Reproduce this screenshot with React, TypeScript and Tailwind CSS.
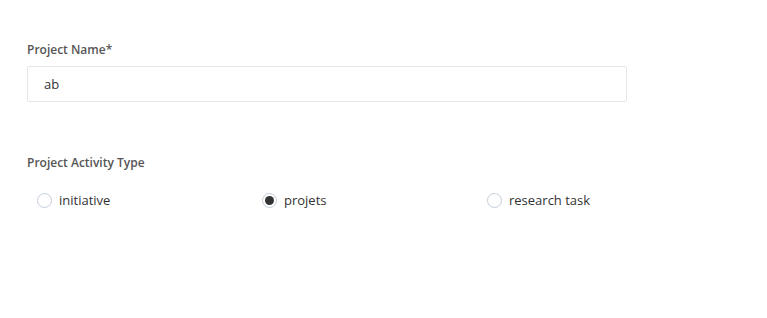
import React from "react";

const options = ["initiative", "projets", "research task"];

const App = () => {
  const selected = "projets";
  return (
    <div className="w-[767px] h-[318px] bg-white text-[#333] font-['Open_Sans',sans-serif]">
      <div className="pt-[42px] pl-[27px]">
        <label className="block text-[12px] font-semibold leading-[16px] text-[#555]">Project Name*</label>
        <div className="mt-[8px] w-[600px] h-[36px] border border-[#e6e6e6] rounded-[2px] flex items-center pl-[16px] pt-[2px] text-[13px] text-[#333]">
          ab
        </div>
        <label className="block mt-[53px] text-[12px] font-semibold leading-[16px] text-[#555]">Project Activity Type</label>
        <div className="mt-[21px] flex">
          {options.map((o) => (
            <div key={o} className="w-[225px] pl-[10px] flex items-center gap-[7px]">
              <span className="w-[15px] h-[15px] rounded-full border border-[#c5cdd9] flex items-center justify-center">
                {o === selected && <span className="w-[9px] h-[9px] rounded-full bg-[#333]" />}
              </span>
              <span className="text-[13px] leading-[16px]">{o}</span>
            </div>
          ))}
        </div>
      </div>
    </div>
  );
};

export default App;
